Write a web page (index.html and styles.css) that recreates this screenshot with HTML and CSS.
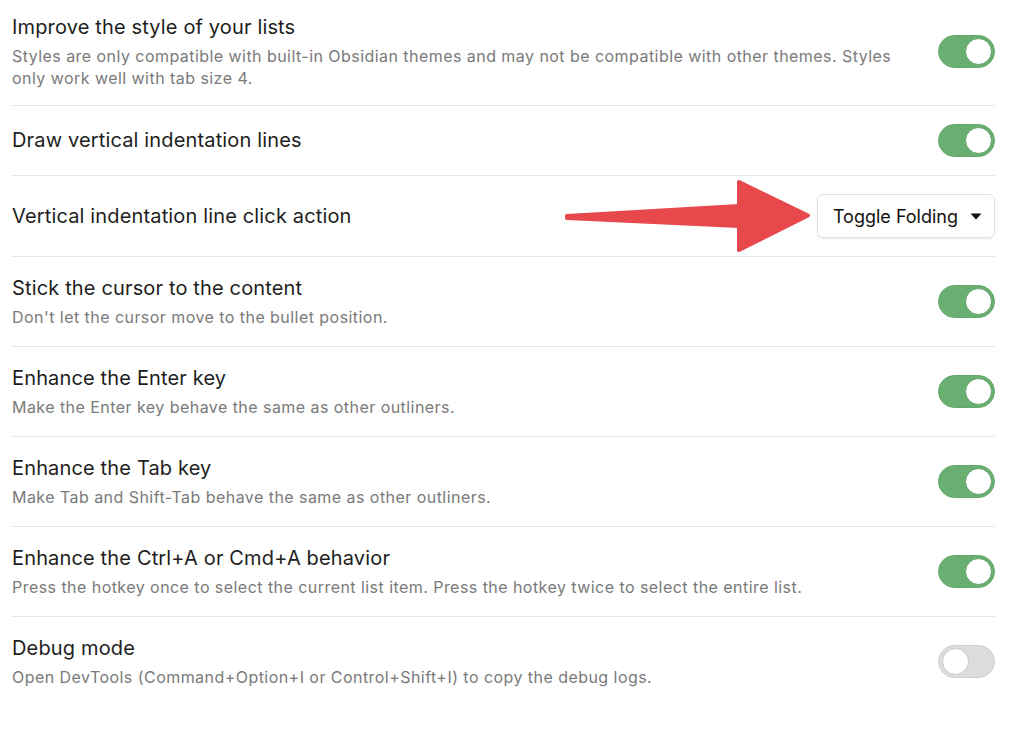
FILE: index.html
```html
<!DOCTYPE html>
<html lang="en">
<head>
  <meta charset="UTF-8">
  <meta name="viewport" content="width=device-width, initial-scale=1.0">
  <title>Outliner Settings</title>
  <link rel="stylesheet" href="styles.css">
</head>
<body>
  <div class="settings">

    <div class="setting-item">
      <div class="setting-info">
        <div class="setting-name">Improve the style of your lists</div>
        <div class="setting-desc">Styles are only compatible with built-in Obsidian themes and may not be compatible with other themes. Styles only work well with tab size 4.</div>
      </div>
      <div class="toggle is-on"><span class="knob"></span></div>
    </div>

    <div class="setting-item">
      <div class="setting-info">
        <div class="setting-name">Draw vertical indentation lines</div>
      </div>
      <div class="toggle is-on"><span class="knob"></span></div>
    </div>

    <div class="setting-item has-arrow">
      <div class="setting-info">
        <div class="setting-name">Vertical indentation line click action</div>
      </div>
      <div class="dropdown">
        <span>Toggle Folding</span>
        <svg class="caret" width="12" height="7" viewBox="0 0 12 7"><path d="M0.5 0.5 H11.5 L6 6.5 Z" fill="#111"/></svg>
      </div>
      <!-- annotation arrow -->
      <svg class="arrow" width="260" height="85" viewBox="0 0 260 85">
        <path d="M7 41 L179 31 L179 7 L248 40.5 L179 75 L179 51 L7 43 Z" fill="#e6484b" stroke="#e6484b" stroke-width="4" stroke-linejoin="round"/>
      </svg>
    </div>

    <div class="setting-item">
      <div class="setting-info">
        <div class="setting-name">Stick the cursor to the content</div>
        <div class="setting-desc">Don't let the cursor move to the bullet position.</div>
      </div>
      <div class="toggle is-on"><span class="knob"></span></div>
    </div>

    <div class="setting-item">
      <div class="setting-info">
        <div class="setting-name">Enhance the Enter key</div>
        <div class="setting-desc">Make the Enter key behave the same as other outliners.</div>
      </div>
      <div class="toggle is-on"><span class="knob"></span></div>
    </div>

    <div class="setting-item">
      <div class="setting-info">
        <div class="setting-name">Enhance the Tab key</div>
        <div class="setting-desc">Make Tab and Shift-Tab behave the same as other outliners.</div>
      </div>
      <div class="toggle is-on"><span class="knob"></span></div>
    </div>

    <div class="setting-item">
      <div class="setting-info">
        <div class="setting-name">Enhance the Ctrl+A or Cmd+A behavior</div>
        <div class="setting-desc">Press the hotkey once to select the current list item. Press the hotkey twice to select the entire list.</div>
      </div>
      <div class="toggle is-on"><span class="knob"></span></div>
    </div>

    <div class="setting-item">
      <div class="setting-info">
        <div class="setting-name">Debug mode</div>
        <div class="setting-desc">Open DevTools (Command+Option+I or Control+Shift+I) to copy the debug logs.</div>
      </div>
      <div class="toggle"><span class="knob"></span></div>
    </div>

  </div>
</body>
</html>
```

FILE: styles.css
```css
body {
  margin: 0;
  background: #fff;
  font-family: Inter, "Noto Sans", "Liberation Sans", sans-serif;
  color: #222;
}
.settings {
  padding: 0 28px 0 12px;
}
.setting-item {
  display: flex;
  align-items: center;
  padding: 18px 0;
  border-top: 1px solid #e6e6e6;
  position: relative;
}
.setting-item:first-child {
  border-top: none;
  padding-top: 14px;
  padding-bottom: 16px;
}
.setting-info {
  flex: 1 1 auto;
  margin-right: 40px;
}
.setting-name {
  font-size: 20px;
  line-height: 27px;
  letter-spacing: 0.15px;
  color: #1e1e1e;
}
.setting-desc {
  font-size: 16px;
  line-height: 22px;
  letter-spacing: 0.45px;
  color: #7a7a7a;
  margin-top: 4px;
}
.toggle {
  flex: 0 0 auto;
  width: 57px;
  height: 33px;
  box-sizing: border-box;
  border-radius: 17px;
  background: #dcdcdc;
  border: 1px solid #cfcfcf;
  position: relative;
}
.toggle .knob {
  position: absolute;
  top: 2px;
  left: 3px;
  width: 27px;
  height: 27px;
  box-sizing: border-box;
  border-radius: 50%;
  background: #fff;
  border: 1px solid #c8c8c8;
}
.toggle.is-on {
  background: #6aaf72;
  border-color: #63a86b;
}
.toggle.is-on .knob {
  left: auto;
  right: 2px;
  border-color: #5d9f65;
}
.dropdown {
  flex: 0 0 auto;
  display: flex;
  align-items: center;
  gap: 12px;
  height: 44px;
  box-sizing: border-box;
  padding: 0 12px 0 15px;
  border: 1px solid #e2e2e2;
  border-radius: 6px;
  box-shadow: 0 1px 2px rgba(0, 0, 0, 0.08);
  font-size: 18px;
  color: #111;
}
.arrow {
  position: absolute;
  left: 548px;
  top: -1px;
}
```
